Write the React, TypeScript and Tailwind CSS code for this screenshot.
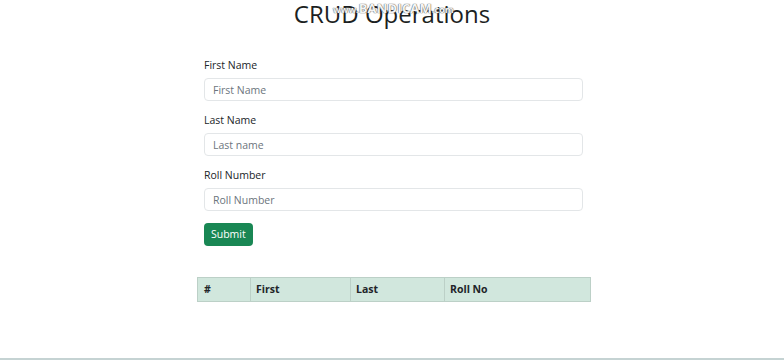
import React from 'react';

const Field = ({ label, placeholder }: { label: string; placeholder: string }) => (
    <div className="mb-[12px]">
        <label className="block text-[10.5px] leading-[14px] text-[#212529] mb-[6px]">{label}</label>
        <input
            type="text"
            placeholder={placeholder}
            className="block w-full h-[23px] px-[8px] text-[10.5px] bg-white border border-[#e3e6e8] rounded-[4px] placeholder:text-[#6c757d] outline-none"
        />
    </div>
);

export default function App() {
    return (
        <div className="relative h-[360px] overflow-hidden bg-white border-b-2 border-[#c5d3d3] font-['Open_Sans',sans-serif] text-[#212529]">
            {/* recorder watermark */}
            <div className="absolute left-[333px] top-[0px] flex items-baseline text-[#f4f4f4] font-bold [text-shadow:0_0_1px_#555,0_0_1px_#555]">
                <span className="text-[9px]">www.</span>
                <span className="text-[13px] leading-[16px] tracking-[0.2px]">BANDICAM</span>
                <span className="text-[9px]">.com</span>
            </div>

            <h1 className="text-center text-[24px] leading-[30px] -mt-[1px] text-[#1c1f22]">CRUD Operations</h1>

            <form className="w-[379px] ml-[204px] mt-[29px]" onSubmit={(e) => e.preventDefault()}>
                <Field label="First Name" placeholder="First Name" />
                <Field label="Last Name" placeholder="Last name" />
                <Field label="Roll Number" placeholder="Roll Number" />
                <button className="block h-[23px] px-[7px] bg-[#198754] text-white text-[10.5px] rounded-[4px]">
                    Submit
                </button>
            </form>

            <table className="ml-[197px] mt-[31px] w-[394px] border-collapse text-[10.5px] font-bold">
                <thead>
                    <tr className="bg-[#d1e7dd] h-[24px]">
                        <th className="w-[53px] text-left pl-[6px] border border-[#bcd0c7]">#</th>
                        <th className="w-[100px] text-left pl-[5px] border border-[#bcd0c7]">First</th>
                        <th className="w-[94px] text-left pl-[5px] border border-[#bcd0c7]">Last</th>
                        <th className="text-left pl-[5px] border border-[#bcd0c7]">Roll No</th>
                    </tr>
                </thead>
            </table>
        </div>
    );
}
